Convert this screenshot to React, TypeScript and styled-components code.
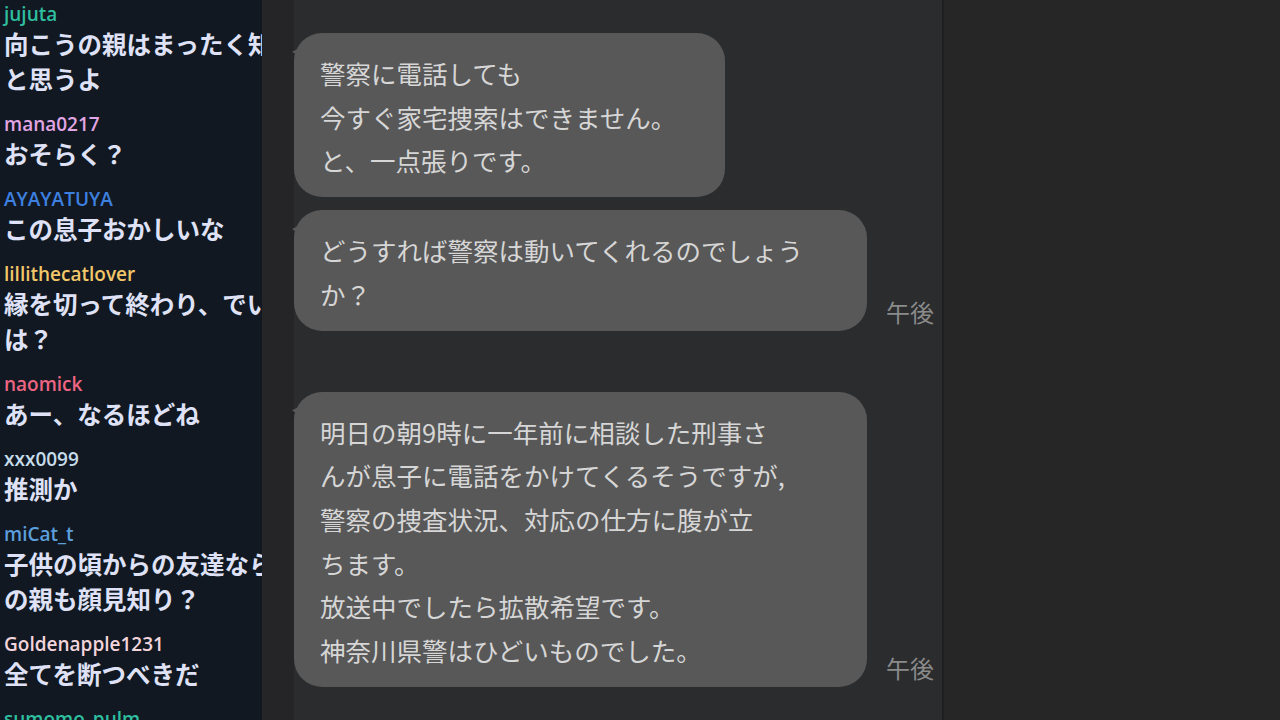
import React from "react";
import styled, { createGlobalStyle } from "styled-components";

const GlobalStyle = createGlobalStyle`
  html, body {
    margin: 0;
    padding: 0;
    background: #262626;
  }
  #root {
    height: 720px;
  }
`;

const Screen = styled.div`
  display: flex;
  width: 1280px;
  height: 720px;
  overflow: hidden;
  background: #262626;
`;

const ChatPanel = styled.div`
  width: 262px;
  flex: 0 0 262px;
  overflow: hidden;
  background: #111822;
  padding-top: 3px;
  box-sizing: border-box;
`;

const Entry = styled.div`
  padding: 0 0 17px 4px;
`;

const Name = styled.div<{ $color: string }>`
  font-family: "Open Sans", "Liberation Sans", sans-serif;
  font-weight: 600;
  font-size: 19px;
  line-height: 22px;
  color: ${p => p.$color};
  white-space: nowrap;
`;

const Message = styled.div`
  margin-top: 1px;
  font-family: "Noto Sans CJK JP", sans-serif;
  font-weight: 700;
  font-size: 24.5px;
  line-height: 35px;
  color: #dfe2f6;
  white-space: nowrap;
`;

const Gutter = styled.div`
  width: 32px;
  flex: 0 0 32px;
  background: #252527;
`;

const Conversation = styled.div`
  width: 650px;
  flex: 0 0 650px;
  background: #2b2c2e;
  padding-top: 33px;
  box-sizing: border-box;
  border-right: 2px solid #1f1f20;
`;

const Row = styled.div<{ $gap: number }>`
  display: flex;
  align-items: flex-end;
  gap: 19px;
  margin-top: ${p => p.$gap}px;
`;

const Bubble = styled.div<{ $width: number }>`
  position: relative;
  width: ${p => p.$width}px;
  box-sizing: border-box;
  background: #585858;
  border-radius: 28px;
  padding: 18px 20px 15px 26px;
  font-family: "Noto Sans CJK JP", sans-serif;
  font-weight: 400;
  font-size: 25.5px;
  line-height: 43.7px;
  color: #d6d6d6;
  white-space: nowrap;

  &::before {
    content: "";
    position: absolute;
    left: -2px;
    top: 14px;
    width: 10px;
    height: 12px;
    background: #585858;
    clip-path: polygon(100% 0, 100% 100%, 0 40%);
  }
`;

const Time = styled.div`
  font-family: "Noto Sans CJK JP", sans-serif;
  font-size: 24px;
  line-height: 30px;
  color: #8a8a8a;
  margin-bottom: 4px;
`;

const Side = styled.div`
  flex: 1;
  background: #262626;
`;

const comments = [
  { name: "jujuta", color: "#2ebf9f", lines: ["向こうの親はまったく知らない", "と思うよ"] },
  { name: "mana0217", color: "#e2a6e4", lines: ["おそらく？"] },
  { name: "AYAYATUYA", color: "#3d80e0", lines: ["この息子おかしいな"] },
  { name: "lillithecatlover", color: "#f2c769", lines: ["縁を切って終わり、でいいので", "は？"] },
  { name: "naomick", color: "#ee6582", lines: ["あー、なるほどね"] },
  { name: "xxx0099", color: "#c6dcea", lines: ["推測か"] },
  { name: "miCat_t", color: "#5c9fdc", lines: ["子供の頃からの友達なら相手", "の親も顔見知り？"] },
  { name: "Goldenapple1231", color: "#f3d5dc", lines: ["全てを断つべきだ"] },
  { name: "sumomo_pulm", color: "#2ebf9f", lines: ["そうだね"] }
];

const messages = [
  {
    gap: 0,
    width: 431,
    time: "",
    lines: ["警察に電話しても", "今すぐ家宅捜索はできません。", "と、一点張りです。"]
  },
  {
    gap: 13,
    width: 573,
    time: "午後",
    lines: ["どうすれば警察は動いてくれるのでしょう", "か？"]
  },
  {
    gap: 61,
    width: 573,
    time: "午後",
    lines: [
      "明日の朝9時に一年前に相談した刑事さ",
      "んが息子に電話をかけてくるそうですが,",
      "警察の捜査状況、対応の仕方に腹が立",
      "ちます。",
      "放送中でしたら拡散希望です。",
      "神奈川県警はひどいものでした。"
    ]
  }
];

const App: React.FC = () => {
  return (
    <>
      <GlobalStyle />
      <Screen>
        <ChatPanel>
          {comments.map(c => (
            <Entry key={c.name}>
              <Name $color={c.color}>{c.name}</Name>
              <Message>
                {c.lines.map(line => (
                  <div key={line}>{line}</div>
                ))}
              </Message>
            </Entry>
          ))}
        </ChatPanel>
        <Gutter />
        <Conversation>
          {messages.map((m, i) => (
            <Row key={i} $gap={m.gap}>
              <Bubble $width={m.width}>
                {m.lines.map(line => (
                  <div key={line}>{line}</div>
                ))}
              </Bubble>
              {m.time && <Time>{m.time}</Time>}
            </Row>
          ))}
        </Conversation>
        <Side />
      </Screen>
    </>
  );
};

export default App;
